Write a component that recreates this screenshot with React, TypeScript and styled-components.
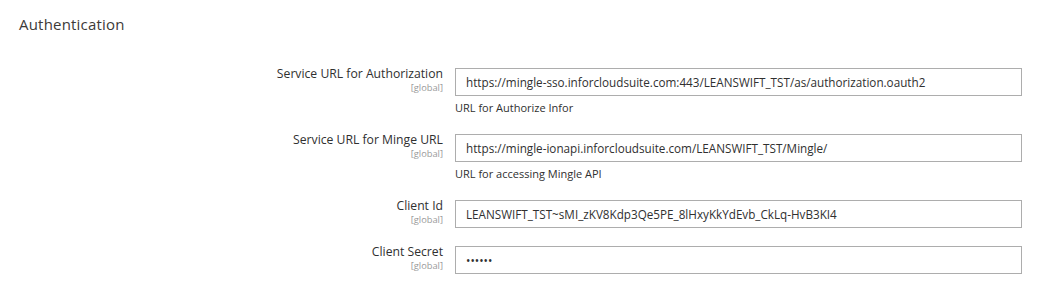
import styled, { createGlobalStyle } from 'styled-components';

const GlobalStyle = createGlobalStyle`
  body {
    margin: 0;
    background: #fff;
    font-family: 'Open Sans', 'Liberation Sans', sans-serif;
    color: #303030;
  }
`;

//Styles
const Page = styled.div`
  padding-top: 14px;
`;

const SectionTitle = styled.h3`
  margin: 0 0 34px 19px;
  font-size: 15px;
  line-height: 20px;
  font-weight: 400;
  letter-spacing: 0.2px;
  color: #3d3a38;
`;

const Fields = styled.div`
  display: flex;
  flex-direction: column;
  gap: 18px;
`;

const Field = styled.div`
  display: grid;
  grid-template-columns: 443px 567px;
  column-gap: 12px;
`;

const LabelCol = styled.div`
  margin-top: -2px;
  text-align: right;
`;

const Label = styled.label`
  display: block;
  font-size: 12.2px;
  line-height: 16px;
  font-weight: 400;
  color: #303030;
`;

const Scope = styled.span`
  display: block;
  font-size: 9.3px;
  line-height: 11px;
  color: #9a9a9a;
`;

const Control = styled.div`
  display: flex;
  flex-direction: column;
`;

const Input = styled.input`
  box-sizing: border-box;
  width: 100%;
  height: 28px;
  padding: 0 10px;
  border: 1px solid #adadad;
  border-radius: 0;
  font-family: 'Open Sans', 'Liberation Sans', sans-serif;
  font-size: 11.7px;
  color: #303030;
  background: #fff;
  outline: none;
`;

const Note = styled.div`
  margin-top: 4px;
  font-size: 11px;
  line-height: 16px;
  color: #303030;
`;

type FieldData = {
  label: string;
  value: string;
  note?: string;
  secret?: boolean;
};

const fields: FieldData[] = [
  {
    label: 'Service URL for Authorization',
    value: 'https://mingle-sso.inforcloudsuite.com:443/LEANSWIFT_TST/as/authorization.oauth2',
    note: 'URL for Authorize Infor',
  },
  {
    label: 'Service URL for Minge URL',
    value: 'https://mingle-ionapi.inforcloudsuite.com/LEANSWIFT_TST/Mingle/',
    note: 'URL for accessing Mingle API',
  },
  {
    label: 'Client Id',
    value: 'LEANSWIFT_TST~sMI_zKV8Kdp3Qe5PE_8lHxyKkYdEvb_CkLq-HvB3KI4',
  },
  {
    label: 'Client Secret',
    value: 'secret',
    secret: true,
  },
];

const App = () => {
  return (
    <Page>
      <GlobalStyle />
      <SectionTitle>Authentication</SectionTitle>
      <Fields>
        {fields.map((f) => (
          <Field key={f.label}>
            <LabelCol>
              <Label>{f.label}</Label>
              <Scope>[global]</Scope>
            </LabelCol>
            <Control>
              <Input
                type={f.secret ? 'password' : 'text'}
                defaultValue={f.value}
                readOnly
              />
              {f.note && <Note>{f.note}</Note>}
            </Control>
          </Field>
        ))}
      </Fields>
    </Page>
  );
};

export default App;
